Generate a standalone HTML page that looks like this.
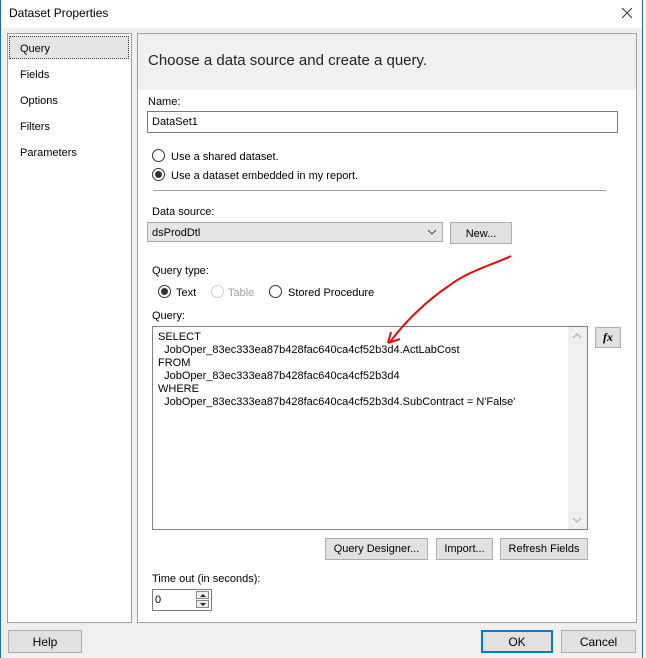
<!DOCTYPE html>
<html><head><style>
*{margin:0;padding:0;box-sizing:border-box}
body{width:646px;height:658px;position:relative;background:#fff;font-family:"Liberation Sans",sans-serif;font-size:11px;color:#000;overflow:hidden}
.a{position:absolute;white-space:nowrap}
.t{margin-top:2px}
.btn{position:absolute;background:#e1e1e1;border:1px solid #adadad;text-align:center;font-size:11px}
.rad{position:absolute;width:13px;height:13px;border:1px solid #333;border-radius:50%;background:#fff}
.rad.on::after{content:"";position:absolute;left:2px;top:2px;width:7px;height:7px;border-radius:50%;background:#333}
</style></head><body>
<div class="a" style="left:0;top:0;width:643px;height:658px;background:#f0f0f0;border-left:1px solid #1b6ec2;border-right:1px solid #1b6ec2"></div>
<div class="a" style="left:1px;top:0;width:641px;height:28px;background:#fff"></div>
<div class="a" style="left:9px;top:6px;font-size:12px">Dataset Properties</div>
<svg class="a" style="left:620px;top:6px" width="14" height="14"><path d="M2 2L12 12M12 2L2 12" stroke="#333" stroke-width="1"/></svg>
<div class="a" style="left:643px;top:0;width:3px;height:658px;background:#fff"></div>

<div class="a" style="left:7px;top:33px;width:125px;height:590px;background:#fff;border:1px solid #a0a0a0"></div>
<div class="a" style="left:9px;top:36px;width:120px;height:23px;background:#e5e5e5;border:1px dotted #333"></div>
<div class="a t" style="left:20px;top:41px">Query</div>
<div class="a t" style="left:20px;top:67px">Fields</div>
<div class="a t" style="left:20px;top:93px">Options</div>
<div class="a t" style="left:20px;top:119px">Filters</div>
<div class="a t" style="left:20px;top:145px">Parameters</div>

<div class="a" style="left:137px;top:33px;width:500px;height:590px;background:#fff;border:1px solid #a0a0a0"></div>
<div class="a" style="left:138px;top:34px;width:498px;height:56px;background:#f0f0f0"></div>
<div class="a" style="left:148px;top:52px;font-size:15px;color:#222">Choose a data source and create a query.</div>

<div class="a t" style="left:148px;top:94px">Name:</div>
<div class="a" style="left:147px;top:111px;width:471px;height:22px;border:1px solid #7a7a7a;background:#fff;padding:4px 4px">DataSet1</div>
<div class="rad" style="left:152px;top:149px"></div><div class="a t" style="left:171px;top:149px">Use a shared dataset.</div>
<div class="rad on" style="left:152px;top:168px"></div><div class="a t" style="left:171px;top:168px">Use a dataset embedded in my report.</div>
<div class="a" style="left:153px;top:190px;width:453px;height:1px;background:#a0a0a0"></div>

<div class="a t" style="left:152px;top:204px">Data source:</div>
<div class="a" style="left:147px;top:222px;width:296px;height:20px;background:#e5e5e5;border:1px solid #acacac;padding:4px 4px">dsProdDtl</div>
<svg class="a" style="left:427px;top:228px" width="10" height="8"><path d="M1 2L5 6L9 2" stroke="#444" fill="none"/></svg>
<div class="btn" style="left:450px;top:222px;width:62px;height:22px;line-height:22px">New...</div>

<div class="a t" style="left:152px;top:263px">Query type:</div>
<div class="rad on" style="left:158px;top:285px"></div><div class="a t" style="left:176px;top:285px">Text</div>
<div class="rad" style="left:211px;top:285px;border-color:#ccc"></div><div class="a t" style="left:228px;top:285px;color:#a0a0a0">Table</div>
<div class="rad" style="left:269px;top:285px"></div><div class="a t" style="left:288px;top:285px">Stored Procedure</div>

<div class="a t" style="left:152px;top:308px">Query:</div>
<div class="a" style="left:152px;top:326px;width:436px;height:204px;border:1px solid #828282;background:#fff"></div>
<div class="a" style="left:568px;top:327px;width:19px;height:202px;background:#f0f0f0"></div>
<svg class="a" style="left:572px;top:332px" width="10" height="8"><path d="M1 6L5 2L9 6" stroke="#aaa" fill="none"/></svg>
<svg class="a" style="left:572px;top:516px" width="10" height="8"><path d="M1 2L5 6L9 2" stroke="#aaa" fill="none"/></svg>
<div class="a" style="left:158px;top:331px;line-height:13px;font-size:11px;white-space:pre">SELECT
  JobOper_83ec333ea87b428fac640ca4cf52b3d4.ActLabCost
FROM
  JobOper_83ec333ea87b428fac640ca4cf52b3d4
WHERE
  JobOper_83ec333ea87b428fac640ca4cf52b3d4.SubContract = N'False'</div>
<div class="btn" style="left:595px;top:327px;width:26px;height:21px;line-height:19px;font-family:'Liberation Serif',serif;font-style:italic;font-weight:bold;font-size:12px">fx</div>

<div class="btn" style="left:325px;top:538px;width:103px;height:22px;line-height:21px">Query Designer...</div>
<div class="btn" style="left:436px;top:538px;width:57px;height:22px;line-height:21px">Import...</div>
<div class="btn" style="left:500px;top:538px;width:88px;height:22px;line-height:21px">Refresh Fields</div>

<div class="a t" style="left:152px;top:571px">Time out (in seconds):</div>
<div class="a" style="left:152px;top:589px;width:60px;height:22px;border:1px solid #7a7a7a;background:#fff;padding:4px 2px">0</div>
<div class="a" style="left:196px;top:591px;width:13px;height:8px;border:1px solid #888;background:#eee"></div>
<div class="a" style="left:196px;top:600px;width:13px;height:8px;border:1px solid #888;background:#eee"></div>
<svg class="a" style="left:199px;top:593px" width="8" height="14"><path d="M1 4L4 1L7 4Z M1 10L4 13L7 10Z" fill="#222"/></svg>

<div class="btn" style="left:8px;top:630px;width:74px;height:23px;line-height:22px;font-size:12px">Help</div>
<div class="btn" style="left:481px;top:630px;width:72px;height:23px;font-size:12px;border:2px solid #0078d7;line-height:20px">OK</div>
<div class="btn" style="left:561px;top:630px;width:75px;height:23px;line-height:22px;font-size:12px">Cancel</div>

<svg class="a" style="left:0;top:0" width="646" height="658"><path d="M511 256 C500 262 470 270 450 285 C425 302 405 322 390 342" stroke="#e01010" stroke-width="2" fill="none"/><path d="M388 343 L400 339 M388 343 L391 332" stroke="#e01010" stroke-width="2" fill="none"/></svg>
</body></html>
